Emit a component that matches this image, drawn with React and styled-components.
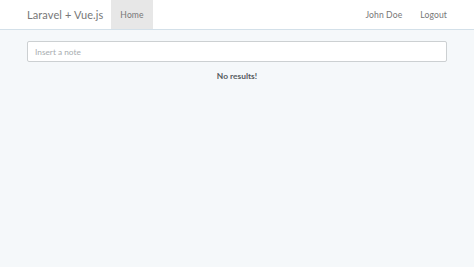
import React from "react";
import styled, { createGlobalStyle } from "styled-components";

const GlobalStyle = createGlobalStyle`
  html, body {
    margin: 0;
    padding: 0;
    background: #f5f8fa;
    font-family: Lato, "Open Sans", sans-serif;
    color: #636b6f;
  }
  * { box-sizing: border-box; }
`;

const Page = styled.div`
  min-height: 267px;
  display: flex;
  flex-direction: column;
`;

const Navbar = styled.nav`
  height: 30px;
  background: #fff;
  border-bottom: 1px solid #d3e0e9;
  display: flex;
  align-items: stretch;
  padding: 0 27px;
`;

const Brand = styled.a`
  font-size: 11px;
  color: #777;
  display: flex;
  align-items: center;
  margin-right: 8px;
  white-space: nowrap;
  letter-spacing: 0.1px;
`;

const NavGroup = styled.div`
  display: flex;
  align-items: stretch;
  margin-left: ${(p) => (p.$right ? "auto" : "0")};
`;

const NavLink = styled.a`
  font-size: 8.6px;
  color: #777;
  display: flex;
  align-items: center;
  padding: 0 ${(p) => (p.$last ? "0" : "9px")} 0 9px;
  background: ${(p) => (p.$active ? "#e7e7e7" : "transparent")};
  letter-spacing: 0.1px;
`;

const Main = styled.main`
  flex: 1;
  padding: 11px 27px 0;
  display: flex;
  flex-direction: column;
  align-items: stretch;
`;

const NoteInput = styled.input`
  height: 21px;
  width: 100%;
  border: 1px solid #ccd0d2;
  border-radius: 2px;
  background: #fff;
  padding: 0 7px;
  font-size: 8.3px;
  font-family: Lato, "Open Sans", sans-serif;
  outline: none;
  &::placeholder {
    color: #a8adb0;
  }
`;

const Empty = styled.p`
  margin: 9px 0 0;
  text-align: center;
  font-size: 8.4px;
  font-weight: 700;
  color: #555b5e;
`;

export default function App() {
  return (
    <Page>
      <GlobalStyle />
      <Navbar>
        <Brand>Laravel + Vue.js</Brand>
        <NavGroup>
          <NavLink $active>Home</NavLink>
        </NavGroup>
        <NavGroup $right>
          <NavLink>John Doe</NavLink>
          <NavLink $last>Logout</NavLink>
        </NavGroup>
      </Navbar>
      <Main>
        <NoteInput placeholder="Insert a note" />
        <Empty>No results!</Empty>
      </Main>
    </Page>
  );
}
